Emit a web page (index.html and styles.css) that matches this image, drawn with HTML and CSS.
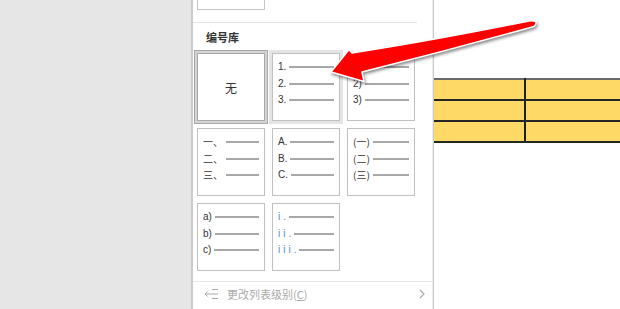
FILE: index.html
```html
<!DOCTYPE html>
<html lang="zh-CN">
<head>
<meta charset="utf-8">
<title>编号库</title>
<link rel="stylesheet" href="styles.css">
</head>
<body>
<div class="app">
  <div class="side"></div>
  <div class="panel">
    <div class="prev-tile"></div>
    <div class="sep"></div>
    <div class="heading">编号库</div>
    <div class="grid">
      <div class="cell selected"><div class="tile none">无</div></div>
      <div class="cell hover"><div class="tile">
        <div class="row"><span class="lbl">1.</span><span class="ln"></span></div>
        <div class="row"><span class="lbl">2.</span><span class="ln"></span></div>
        <div class="row"><span class="lbl">3.</span><span class="ln"></span></div>
      </div></div>
      <div class="cell"><div class="tile">
        <div class="row"><span class="lbl">1)</span><span class="ln"></span></div>
        <div class="row"><span class="lbl">2)</span><span class="ln"></span></div>
        <div class="row"><span class="lbl">3)</span><span class="ln"></span></div>
      </div></div>
      <div class="cell"><div class="tile">
        <div class="row"><span class="lbl cjk">一、</span><span class="ln"></span></div>
        <div class="row"><span class="lbl cjk">二、</span><span class="ln"></span></div>
        <div class="row"><span class="lbl cjk">三、</span><span class="ln"></span></div>
      </div></div>
      <div class="cell"><div class="tile">
        <div class="row"><span class="lbl">A.</span><span class="ln"></span></div>
        <div class="row"><span class="lbl">B.</span><span class="ln"></span></div>
        <div class="row"><span class="lbl">C.</span><span class="ln"></span></div>
      </div></div>
      <div class="cell"><div class="tile">
        <div class="row"><span class="lbl cjk">(一)</span><span class="ln"></span></div>
        <div class="row"><span class="lbl cjk">(二)</span><span class="ln"></span></div>
        <div class="row"><span class="lbl cjk">(三)</span><span class="ln"></span></div>
      </div></div>
      <div class="cell"><div class="tile">
        <div class="row"><span class="lbl">a)</span><span class="ln"></span></div>
        <div class="row"><span class="lbl">b)</span><span class="ln"></span></div>
        <div class="row"><span class="lbl">c)</span><span class="ln"></span></div>
      </div></div>
      <div class="cell"><div class="tile">
        <div class="row"><span class="lbl roman">i.</span><span class="ln"></span></div>
        <div class="row"><span class="lbl roman">ii.</span><span class="ln"></span></div>
        <div class="row"><span class="lbl roman">iii.</span><span class="ln"></span></div>
      </div></div>
    </div>
    <div class="footer">
      <svg class="lvl-icon" width="15" height="12" viewBox="0 0 15 12">
        <path d="M8 1.5H14M1 6H14M8 10.5H14" stroke="#a8a8a8" stroke-width="1" fill="none"/>
        <path d="M3.5 3.5L1 6L3.5 8.5" stroke="#a8a8a8" stroke-width="1" fill="none"/>
      </svg>
      <span class="footer-text">更改列表级别(<u>C</u>)</span>
      <svg class="chev" width="6" height="10" viewBox="0 0 6 10">
        <path d="M1 1L5 5L1 9" stroke="#a8a8a8" stroke-width="1.1" fill="none"/>
      </svg>
    </div>
  </div>
  <div class="doc">
    <table class="sheet">
      <tr><td class="c1"></td><td></td></tr>
      <tr><td class="c1"></td><td></td></tr>
      <tr><td class="c1"></td><td></td></tr>
    </table>
  </div>
</div>
<svg class="arrow" width="620" height="309" viewBox="0 0 620 309">
  <path d="M331 72 L349 49.5 L352 53 Q430 41 529 21 Q540 20 534 26.5 Q450 50 362 72 L364 81.5 Z" fill="#ff0000" stroke="#ffffff" stroke-width="1.5" stroke-linejoin="round"/>
</svg>
</body>
</html>
```
FILE: styles.css
```css
html, body {
  margin: 0;
  padding: 0;
  background: #ffffff;
}
body {
  width: 620px;
  height: 309px;
  overflow: hidden;
  position: relative;
  font-family: "Noto Sans CJK SC", "Liberation Sans", sans-serif;
}
.app {
  display: flex;
  height: 309px;
}
.side {
  width: 191px;
  flex: none;
  background: #e6e6e6;
}
.panel {
  width: 243px;
  flex: none;
  box-sizing: border-box;
  border-left: 2px solid #cbcbcb;
  border-right: 1px solid #c9c9c9;
  box-shadow: inset -1px 0 0 #efefef;
  background: #ffffff;
  display: flex;
  flex-direction: column;
}
.prev-tile {
  width: 68px;
  height: 10px;
  box-sizing: border-box;
  margin-left: 4px;
  border: 1px solid #c4c4c4;
  border-top: none;
}
.sep {
  height: 1px;
  background: #e2e2e2;
  margin: 12px 16px 0 0;
}
.heading {
  margin: 7px 0 0 13px;
  font-size: 11px;
  line-height: 14px;
  font-weight: bold;
  color: #333333;
}
.grid {
  display: grid;
  grid-template-columns: repeat(3, 74px);
  grid-auto-rows: 74px;
  gap: 1px;
  margin: 6px 0 0 1px;
}
.cell {
  box-sizing: border-box;
  padding: 3px;
}
.cell.selected {
  border: 1px solid #a7a7a7;
  background: #d4d4d4;
  padding: 2px;
}
.cell.hover {
  background: #e4e4e4;
}
.tile {
  width: 68px;
  height: 68px;
  box-sizing: border-box;
  border: 1px solid #c0c0c0;
  background: #ffffff;
  padding: 5px 5px 0 5px;
  font-family: "Liberation Sans", "Noto Sans CJK SC", sans-serif;
  font-size: 10px;
  color: #333333;
}
.selected .tile {
  border-color: #a9a9a9;
}
.tile.none {
  display: flex;
  align-items: center;
  justify-content: center;
  padding: 0;
  font-family: "Noto Sans CJK SC", sans-serif;
  font-size: 12px;
  color: #333333;
}
.row {
  display: flex;
  align-items: center;
  gap: 3px;
  height: 16.5px;
}
.lbl {
  flex: none;
  line-height: 12px;
}
.lbl.cjk {
  font-family: "Noto Sans CJK SC", sans-serif;
}
.lbl.roman {
  color: #4f8bd4;
  letter-spacing: 3px;
  margin-right: -3px;
}
.ln {
  flex: 1;
  height: 2px;
  background: #a8a8a8;
}
.footer {
  margin-top: 7px;
  border-top: 1px solid #e6e6e6;
  height: 24px;
  display: flex;
  align-items: center;
  padding: 0 8px 0 11px;
  color: #ababab;
  font-size: 11px;
}
.lvl-icon {
  flex: none;
}
.footer-text {
  margin-left: 8px;
}
.chev {
  margin-left: auto;
  flex: none;
}
.doc {
  flex: 1;
  overflow: hidden;
  padding-top: 78px;
}
.sheet {
  border-collapse: collapse;
  width: 300px;
}
.sheet td {
  height: 19px;
  padding: 0;
  background: #ffd966;
  border-top: 2px solid #252525;
  border-bottom: 2px solid #252525;
}
.sheet tr:first-child td {
  border-top-color: #6a6a6a;
}
.sheet td.c1 {
  width: 90px;
  border-right: 2px solid #1e1e1e;
}
.arrow {
  position: absolute;
  left: 0;
  top: 0;
  pointer-events: none;
  filter: drop-shadow(1px 2px 1.5px rgba(0, 0, 0, 0.45));
}
```
